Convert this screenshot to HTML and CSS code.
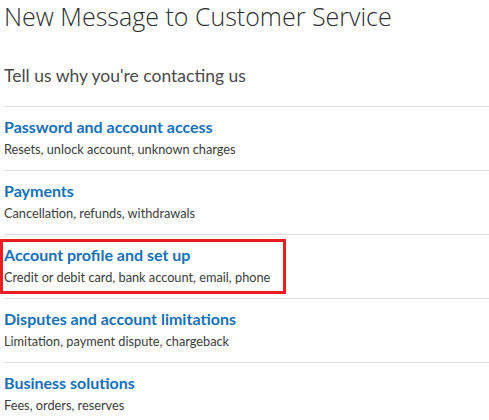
FILE: index.html
```html
<!DOCTYPE html>
<html lang="en">
<head>
<meta charset="utf-8">
<title>New Message to Customer Service</title>
<link rel="stylesheet" href="styles.css">
</head>
<body>
<main class="page">
  <h1 class="title">New Message to Customer Service</h1>
  <p class="subtitle">Tell us why you're contacting us</p>
  <ul class="topics">
    <li class="topic">
      <div class="topic-inner">
        <a class="topic-name" href="#">Password and account access</a>
        <p class="topic-desc">Resets, unlock account, unknown charges</p>
      </div>
    </li>
    <li class="topic">
      <div class="topic-inner">
        <a class="topic-name" href="#">Payments</a>
        <p class="topic-desc">Cancellation, refunds, withdrawals</p>
      </div>
    </li>
    <li class="topic topic-highlight">
      <div class="topic-inner">
        <a class="topic-name" href="#">Account profile and set up</a>
        <p class="topic-desc">Credit or debit card, bank account, email, phone</p>
      </div>
    </li>
    <li class="topic">
      <div class="topic-inner">
        <a class="topic-name" href="#">Disputes and account limitations</a>
        <p class="topic-desc">Limitation, payment dispute, chargeback</p>
      </div>
    </li>
    <li class="topic">
      <div class="topic-inner">
        <a class="topic-name" href="#">Business solutions</a>
        <p class="topic-desc">Fees, orders, reserves</p>
      </div>
    </li>
  </ul>
</main>
</body>
</html>
```

FILE: styles.css
```css
html, body {
  margin: 0;
  padding: 0;
  background: #ffffff;
}

body {
  font-family: Lato, "Open Sans", "Liberation Sans", sans-serif;
  color: #333333;
}

.page {
  padding: 0 0 0 4px;
}

.title {
  margin: 0;
  padding-top: 1px;
  font-family: "Open Sans", Lato, sans-serif;
  font-size: 25px;
  line-height: 31px;
  font-weight: 300;
  color: #2c2e2f;
}

.subtitle {
  margin: 32px 0 0;
  font-size: 17.5px;
  line-height: 24px;
  font-weight: 400;
  color: #4a4a4a;
}

.topics {
  list-style: none;
  margin: 18px 0 0;
  padding: 0;
}

.topic {
  border-top: 1px solid #dedede;
  padding: 9px 0 11px;
}

.topic-name {
  display: block;
  font-size: 16px;
  line-height: 21px;
  font-weight: 700;
  color: #1670b8;
  text-decoration: none;
}

.topic-desc {
  margin: 2px 0 0;
  font-size: 12.75px;
  line-height: 20px;
  color: #3c3c3c;
}

.topic-highlight {
  padding: 4px 0 4px;
}

.topic-highlight .topic-inner {
  display: inline-block;
  margin-left: -4px;
  padding: 2px 13px 4px 1px;
  border: 3px solid #ec1c24;
}
```
